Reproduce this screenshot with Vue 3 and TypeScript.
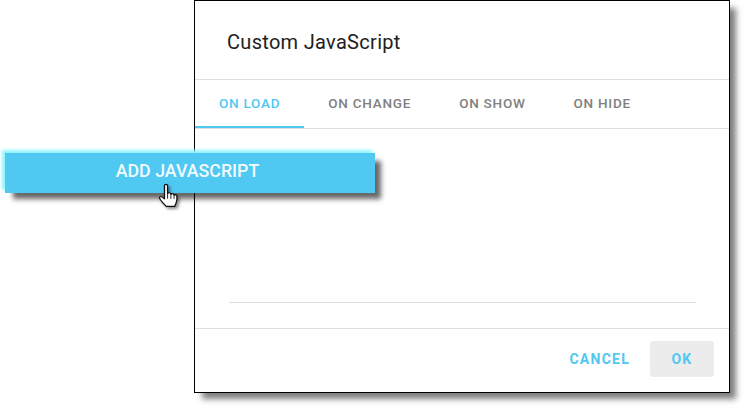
<script setup lang="ts">
const tabs: string[] = ['ON LOAD', 'ON CHANGE', 'ON SHOW', 'ON HIDE']
</script>

<template>
  <div class="stage">
    <section class="dialog">
      <header class="title">Custom JavaScript</header>
      <nav class="tabs">
        <div v-for="(t, i) in tabs" :key="t" class="tab" :class="{ active: i === 0 }">{{ t }}</div>
      </nav>
      <div class="body"><div class="field"></div></div>
      <footer class="actions">
        <button class="btn">CANCEL</button>
        <button class="btn ok">OK</button>
      </footer>
    </section>
    <div class="cta">ADD JAVASCRIPT</div>
    <svg class="cursor" width="26" height="28" viewBox="0 0 22 28" preserveAspectRatio="none">
      <path d="M5.500 2.600c0-1.600 2.600-1.600 2.600 0v8.200c.3-1.400 2.500-1.400 2.700.1l.1.600c.3-1.200 2.400-1.100 2.600.3l.1.700c.4-1 2.300-.8 2.400.6.200 2.600.1 5.400-.9 7.600-.5 1.100-.9 2-.9 2.700H6.800c-.4-1.400-1.700-2.500-2.800-3.800-1-1.200-2.300-3-2.700-4.400-.4-1.300 1-2.200 2-1.300l2.200 2z" fill="#fff" stroke="#111" stroke-width="1.100" stroke-linejoin="round"/>
      <path d="M8.100 10.800v5M10.900 11.500v4.300M13.600 12.500v3.300" fill="none" stroke="#333" stroke-width=".9"/>
    </svg>
  </div>
</template>

<style>
html, body { margin: 0; background: #fff; }
</style>

<style scoped>
.stage { position: relative; width: 745px; height: 408px; overflow: hidden; background: #fff; font-family: Roboto, sans-serif; }
.dialog { position: relative; margin-left: 194px; width: 536px; height: 393px; box-sizing: border-box; border: 1.500px solid #000; background: #fff; display: flex; flex-direction: column; box-shadow: 7px 7px 6px -1px rgba(0, 0, 0, .5); }
.title { height: 79px; box-sizing: border-box; padding: 29px 0 0 32px; font-size: 20px; line-height: 24px; color: #212121; letter-spacing: .3px; border-bottom: 1px solid #e0e0e0; }
.tabs { display: flex; height: 49px; box-sizing: border-box; border-bottom: 1px solid #e0e0e0; }
.tab { padding: 0 24px; line-height: 46px; font-size: 13.500px; font-weight: 500; letter-spacing: .75px; color: #808080; white-space: nowrap; box-sizing: border-box; height: 48px; }
.tab.active { color: #4fc8f2; border-bottom: 2px solid #4fc8f2; }
.body { flex: 1; padding: 0 33px 25px 34px; display: flex; align-items: flex-end; border-bottom: 1px solid #e0e0e0; }
.field { flex: 1; border-bottom: 1px solid #e0e0e0; }
.actions { height: 63px; box-sizing: border-box; padding: 12px 15px 0 0; display: flex; justify-content: flex-end; gap: 4px; }
.btn { border: 0; background: none; height: 36px; min-width: 64px; padding: 0 16px; border-radius: 3px; font: 700 14px Roboto, sans-serif; letter-spacing: 1.250px; color: #4fc8f2; }
.ok { background: #ececec; }
.cta { position: absolute; left: 5px; top: 153px; width: 370px; height: 40px; box-sizing: border-box; padding-right: 5px; background: #4fc8f2; color: #f2fbfe; font-size: 17.800px; font-weight: 500; line-height: 36px; text-align: center; box-shadow: -3px -3px 3px #8ff5ff, 7px 7px 5px -1px rgba(0, 0, 0, .6); }
.cursor { position: absolute; left: 158px; top: 183px; filter: drop-shadow(2px 2px 1.500px rgba(0, 0, 0, .45)); }
</style>
